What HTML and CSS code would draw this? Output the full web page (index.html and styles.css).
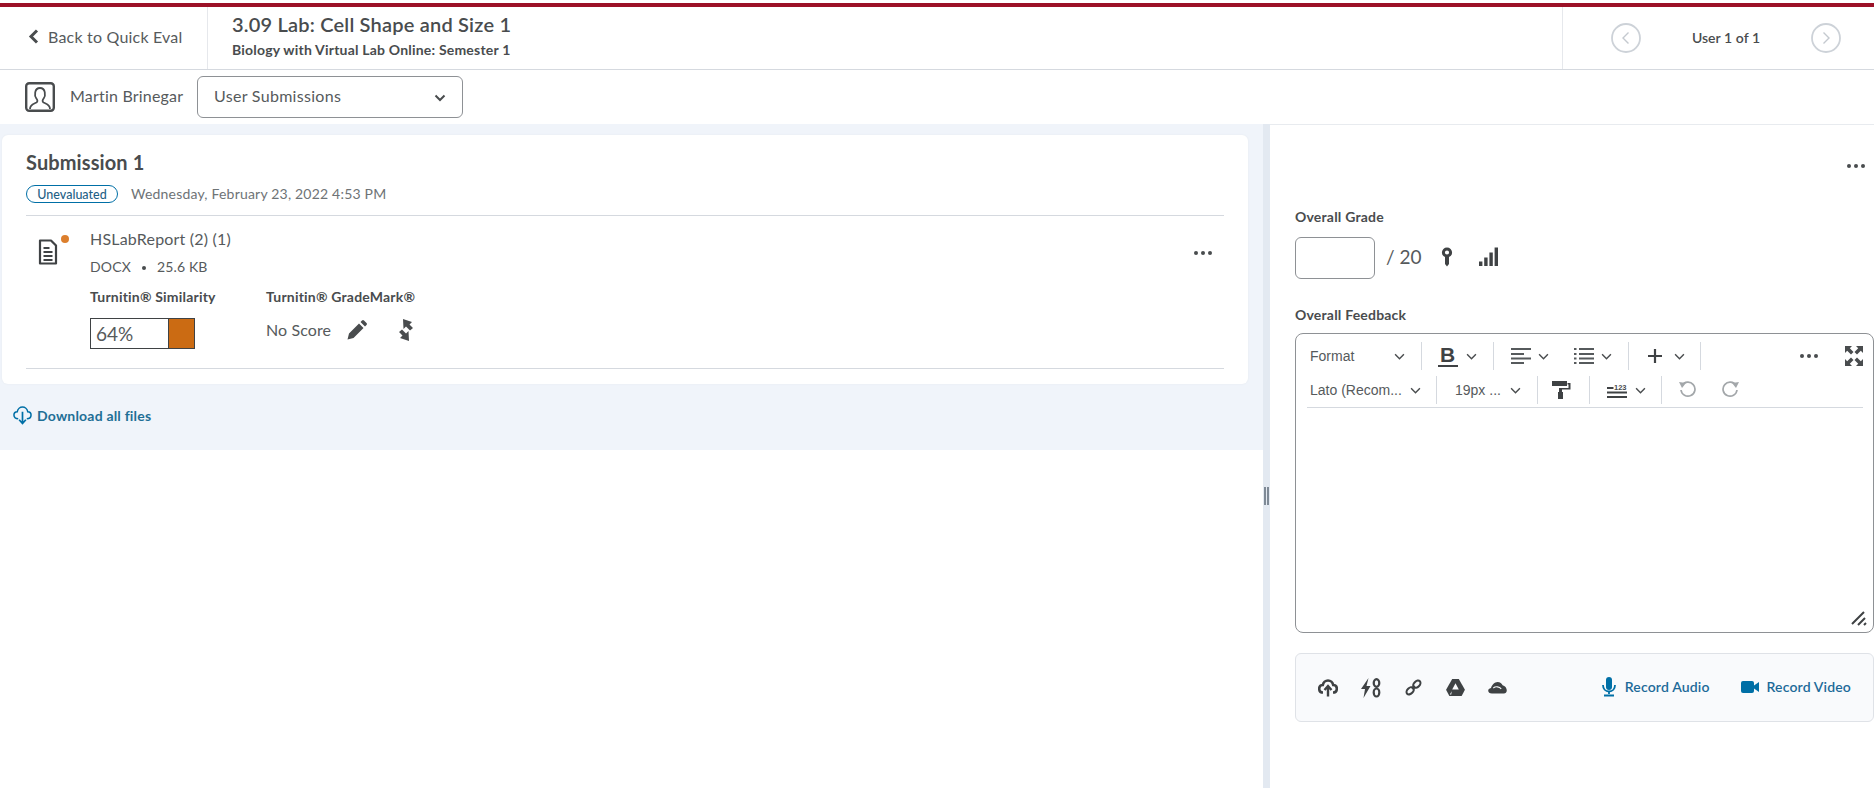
FILE: index.html
```html
<!DOCTYPE html>
<html lang="en">
<head>
<meta charset="utf-8">
<title>3.09 Lab: Cell Shape and Size 1</title>
<link rel="stylesheet" href="styles.css">
</head>
<body>
<div class="accent"></div>
<header class="header">
  <a class="back">
    <svg class="back-icon" viewBox="0 0 11 15" width="11" height="15"><path d="M9 1.500 3 7.500l6 6" fill="none" stroke="#494c4e" stroke-width="3"/></svg>
    <span>Back to Quick Eval</span>
  </a>
  <div class="titles">
    <h1 class="title">3.09 Lab: Cell Shape and Size 1</h1>
    <div class="subtitle">Biology with Virtual Lab Online: Semester 1</div>
  </div>
  <div class="pager">
    <span class="circle"><svg viewBox="0 0 30 30" width="30" height="30"><circle cx="15" cy="15" r="14" fill="none" stroke="#cdd2d8" stroke-width="1.800"/><path d="M17.500 9.500 12 15l5.500 5.500" fill="none" stroke="#c4c9cf" stroke-width="1.400"/></svg></span>
    <span class="pager-text">User 1 of 1</span>
    <span class="circle"><svg viewBox="0 0 30 30" width="30" height="30"><circle cx="15" cy="15" r="14" fill="none" stroke="#cdd2d8" stroke-width="1.800"/><path d="M12.500 9.500 18 15l-5.500 5.500" fill="none" stroke="#c4c9cf" stroke-width="1.400"/></svg></span>
  </div>
</header>
<div class="subbar">
  <svg class="avatar" viewBox="0 0 30 30" width="30" height="30"><rect x="1.200" y="1.200" width="27.600" height="27.600" rx="3" fill="none" stroke="#494c4e" stroke-width="2.400"/><path d="M5 27c0-4.500 3.500-5 6.500-6.500 1.500-1 1-2.500-.3-4.200C9.500 14 9 6 15 6s5.500 8 3.800 10.300c-1.300 1.700-1.800 3.200-.3 4.200 3 1.500 6.500 2 6.500 6.500" fill="none" stroke="#494c4e" stroke-width="1.800"/></svg>
  <span class="user-name">Martin Brinegar</span>
  <div class="select">
    <span class="select-text">User Submissions</span>
    <svg class="select-chev" viewBox="0 0 12 8" width="12" height="8"><path d="M1.500 1.500 6 6l4.500-4.500" fill="none" stroke="#494c4e" stroke-width="2"/></svg>
  </div>
</div>
<main class="main">
  <section class="left">
    <div class="left-top">
      <article class="card">
        <h2 class="card-title">Submission 1</h2>
        <div class="meta">
          <span class="pill">Unevaluated</span>
          <span class="date">Wednesday, February 23, 2022 4:53 PM</span>
        </div>
        <div class="file">
          <div class="file-icon">
            <svg viewBox="0 0 20 26" width="20" height="26"><path d="M2 1.500h11l5 5V24.500H2z" fill="none" stroke="#3f4244" stroke-width="2.200" stroke-linejoin="round"/><path d="M5.500 9h6M5.500 13h9M5.500 17h9M5.500 21h9" stroke="#3f4244" stroke-width="1.800"/></svg>
            <span class="dot"></span>
          </div>
          <div class="file-body">
            <div class="file-name">HSLabReport (2) (1)</div>
            <div class="file-meta"><span>DOCX</span><span class="bullet"></span><span>25.6 KB</span></div>
            <div class="turnitin">
              <div class="t-col t-sim">
                <div class="t-label">Turnitin® Similarity</div>
                <div class="score"><span class="score-num">64%</span><span class="score-color"></span></div>
              </div>
              <div class="t-col">
                <div class="t-label">Turnitin® GradeMark®</div>
                <div class="grademark">
                  <span>No Score</span>
                  <svg class="pencil" viewBox="0 0 20 20" width="20" height="20"><path d="M.500 19.500l1.500-6L12 3.500 16.500 8l-10 10zM13.500 2l1.500-1.500a1.500 1.500 0 0 1 2 0L19.500 3a1.500 1.500 0 0 1 0 2L18 6.500z" fill="#494c4e"/></svg>
                  <svg class="swap" viewBox="0 0 18 22" width="18" height="22"><path d="M6 0l9 3-2.500 2.500L16 9l-3 2.500-4-4L6.500 10zM12 22l-9-3 2.500-2.500L2 13l3-2.500 4 4L11.500 12z" fill="#494c4e"/></svg>
                </div>
              </div>
            </div>
          </div>
          <div class="dots file-dots"><i></i><i></i><i></i></div>
        </div>
      </article>
      <a class="download">
        <svg viewBox="0 0 20 20" width="19" height="19"><path d="M5.500 13.500C2.500 13.500 1 11.500 1 9.500s1.500-3.500 3.500-3.500C5 3 7.500 1 10 1s5 2 5.500 5c2 0 3.500 1.500 3.500 3.500s-1.500 4-4.500 4" fill="none" stroke="#006fa6" stroke-width="1.600"/><path d="M10 6v12M6.500 14.500 10 18.500l3.500-4" fill="none" stroke="#006fa6" stroke-width="1.800"/></svg>
        <span>Download all files</span>
      </a>
    </div>
  </section>
  <div class="splitter"><span class="grip"></span></div>
  <aside class="right">
    <div class="right-menu"><div class="dots"><i></i><i></i><i></i></div></div>
    <label class="field-label">Overall Grade</label>
    <div class="grade-row">
      <span class="grade-input"></span>
      <span class="grade-total">/ 20</span>
      <svg class="rubric" viewBox="0 0 12 20" width="12" height="20"><circle cx="6" cy="5.500" r="3.600" fill="none" stroke="#3f4244" stroke-width="3"/><path d="M4 9h4v8L6 19.500 4 17z" fill="#3f4244"/></svg>
      <svg class="bars" viewBox="0 0 20 20" width="20" height="20"><path d="M0 14.500h3.400V19H0zM5.200 10.500h3.400V19H5.200zM10.400 5.500h3.400V19h-3.400zM15.600 .500H19V19h-3.400z" fill="#3f4244"/></svg>
    </div>
    <label class="field-label feedback-label">Overall Feedback</label>
    <div class="editor">
      <div class="toolbar">
        <div class="tb-row">
          <span class="tb-text w-format">Format</span><svg class="chev" viewBox="0 0 10 6"><use href="#c"/></svg><span class="sep m16"></span>
          <span class="bold-b">B</span><svg class="chev m8" viewBox="0 0 10 6"><use href="#c"/></svg><span class="sep m16"></span>
          <svg class="tb-ic m17" viewBox="0 0 20 18" width="20" height="18"><path d="M0 2h20M0 7h13M0 11.500h20M0 16h13" stroke="#565a5c" stroke-width="2"/></svg><svg class="chev m7" viewBox="0 0 10 6"><use href="#c"/></svg>
          <svg class="tb-ic m25" viewBox="0 0 20 18" width="20" height="18"><path d="M5 2h15M5 7h15M5 11.500h15M5 16h15" stroke="#565a5c" stroke-width="2"/><path d="M0 2h2.500M0 7h2.500M0 11.500h2.500M0 16h2.500" stroke="#565a5c" stroke-width="2"/></svg><svg class="chev m7" viewBox="0 0 10 6"><use href="#c"/></svg><span class="sep m16"></span>
          <svg class="tb-ic m19" viewBox="0 0 14 14" width="14" height="14"><path d="M7 0v14M0 7h14" stroke="#3f4244" stroke-width="2.200"/></svg><svg class="chev m12" viewBox="0 0 10 6"><use href="#c"/></svg><span class="sep m15"></span>
          <div class="dots tb-dots"><i></i><i></i><i></i></div>
          <svg class="tb-ic full" viewBox="0 0 18 20" width="18" height="20"><path d="M0 0h7L4.800 2.200 8.500 6 6 8.500 2.200 4.800 0 7zM18 0v7l-2.200-2.200L12 8.500 9.500 6l3.700-3.800L11 0zM0 20v-7l2.200 2.200L6 11.500 8.500 14l-3.700 3.800L7 20zM18 20h-7l2.200-2.200L9.500 14l2.500-2.500 3.800 3.700L18 13z" fill="#494c4e"/></svg>
        </div>
        <div class="tb-row">
          <span class="tb-text w-font">Lato (Recom...</span><svg class="chev" viewBox="0 0 10 6"><use href="#c"/></svg><span class="sep m15"></span>
          <span class="tb-text w-size">19px ...</span><svg class="chev" viewBox="0 0 10 6"><use href="#c"/></svg><span class="sep m16"></span>
          <svg class="tb-ic m13" viewBox="0 0 20 18" width="20" height="18"><path d="M1 0h15v5H1z" fill="#3f4244"/><path d="M16.500 2H19.500V8.500H11V11h1v7H7v-7h1V7h9.500V3.500h-1z" fill="#3f4244"/></svg><span class="sep m18"></span>
          <svg class="tb-ic m17" viewBox="0 0 20 15" width="20" height="15"><path d="M0 5h6.500M0 9.500h20M0 14h20" stroke="#3f4244" stroke-width="2"/><text class="lh-num" x="7" y="6.500">123</text></svg><svg class="chev m8" viewBox="0 0 10 6"><use href="#c"/></svg><span class="sep m15"></span>
          <svg class="tb-ic m16" viewBox="0 0 18 18" width="18" height="18"><path d="M4 4.500A7 7 0 1 1 3 9" fill="none" stroke="#a3a7aa" stroke-width="1.700"/><path d="M1 1l7 1-4 5z" fill="#a3a7aa"/></svg>
          <svg class="tb-ic m26" viewBox="0 0 18 18" width="18" height="18"><path d="M14 4.500A7 7 0 1 0 15 9" fill="none" stroke="#a3a7aa" stroke-width="1.700"/><path d="M17 1l-7 1 4 5z" fill="#a3a7aa"/></svg>
        </div>
      </div>
      <svg class="resize" viewBox="0 0 16 16" width="16" height="16"><path d="M1 14 13 2M7 15l7-7M13 15l2-2" stroke="#3f4244" stroke-width="2" fill="none"/></svg>
    </div>
    <div class="attach">
      <div class="attach-icons">
        <svg viewBox="0 0 20 18" width="20" height="18"><path d="M5 13.500C2.500 13.500 1.200 12 1.200 9.500S3 6 4.800 6C5.300 3.500 7.500 1.500 10 1.500s4.700 2 5.200 4.500C17 6 18.800 7 18.800 9.500S17.500 13.500 15 13.500" fill="none" stroke="#3f4244" stroke-width="2.600"/><path d="M10 17.500V8M6.500 11 10 7l3.500 4" fill="none" stroke="#3f4244" stroke-width="2.400"/></svg>
        <svg viewBox="0 0 20 20" width="20" height="20"><path d="M7.500 0 0 11h4l-1.500 9L9.500 8h-4z" fill="#3f4244"/><ellipse cx="15.500" cy="5" rx="2.800" ry="3.800" fill="none" stroke="#3f4244" stroke-width="2.200"/><ellipse cx="15.500" cy="14.500" rx="2.800" ry="4" fill="none" stroke="#3f4244" stroke-width="2.200"/></svg>
        <svg viewBox="0 0 20 20" width="19" height="19"><ellipse cx="13.500" cy="6.500" rx="4.500" ry="3" transform="rotate(-45 13.500 6.500)" fill="none" stroke="#3f4244" stroke-width="2.200"/><ellipse cx="6.500" cy="13.500" rx="4.500" ry="3" transform="rotate(-45 6.500 13.500)" fill="none" stroke="#3f4244" stroke-width="2.200"/><path d="M8.500 11.500l3-3" stroke="#3f4244" stroke-width="2.200"/></svg>
        <svg viewBox="0 0 20 18" width="19" height="17"><path d="M6.500 0h7L20 11.500 16.500 18h-13L0 11.500z" fill="#3f4244"/><path d="M10 4.500 6.500 11h7zM6 13l-2 3.500h1.500z" fill="#f9fafb"/></svg>
        <svg viewBox="0 0 20 14" width="19" height="13"><path d="M4 13.500C1.500 13.500 0 12 0 10.500S1 8 3 7.500C4 4 7 1 10 1s4.500 1.500 5.500 3.500C18 5 20 7.500 20 10s-1.500 3.500-3 3.500z" fill="#3f4244"/><path d="M5.500 7.500C8 5.500 12 6 14 8.500" fill="none" stroke="#f9fafb" stroke-width="1.200"/></svg>
      </div>
      <div class="records">
        <a class="record">
          <svg viewBox="0 0 16 20" width="16" height="20"><rect x="5" y="0" width="6" height="13" rx="3" fill="#006fa6"/><path d="M2 8c0 4 2.500 6.500 6 6.500s6-2.500 6-6.500" fill="none" stroke="#006fa6" stroke-width="1.800"/><path d="M8 14v3M3 18.500h10" stroke="#006fa6" stroke-width="1.800"/></svg>
          <span>Record Audio</span>
        </a>
        <a class="record">
          <svg viewBox="0 0 18 12" width="18" height="12"><rect x="0" y="0" width="13" height="12" rx="2" fill="#006fa6"/><path d="M13 4.500 18 1v10l-5-3.500z" fill="#006fa6"/></svg>
          <span>Record Video</span>
        </a>
      </div>
    </div>
  </aside>
</main>
<svg class="defs" width="0" height="0"><defs><path id="c" d="M1 1l4 4 4-4" fill="none" stroke="#494c4e" stroke-width="1.300"/></defs></svg>
</body>
</html>
```

FILE: styles.css
```css
* { box-sizing: border-box; }
html, body { margin: 0; height: 100%; }
body {
  width: 1874px;
  height: 788px;
  overflow: hidden;
  background: #fff;
  color: #494c4e;
  font-family: Lato, "Noto Sans", sans-serif;
  font-size: 16px;
}
.accent { height: 4px; margin-top: 3px; background: #9c1127; }
.header {
  display: flex;
  height: 63px;
  border-bottom: 1px solid #d5d9df;
}
.back {
  display: flex;
  align-items: center;
  gap: 9px;
  width: 208px;
  padding: 0 0 3px 28px;
  border-right: 1px solid #e6e8ec;
  font-size: 16px;
  letter-spacing: 0.2px;
  color: #565a5c;
}
.titles { flex: 1; padding: 5px 0 0 24px; }
.title {
  margin: 0;
  font-size: 20px;
  line-height: 24px;
  font-weight: 600;
  letter-spacing: 0.2px;
  color: #494c4e;
}
.subtitle {
  margin-top: 6px;
  font-size: 14px;
  line-height: 16px;
  font-weight: 700;
  letter-spacing: 0.2px;
  color: #494c4e;
}
.pager {
  display: flex;
  align-items: center;
  width: 312px;
  padding-left: 48px;
  border-left: 1px solid #e6e8ec;
}
.circle { display: flex; width: 30px; height: 30px; }
.pager-text {
  width: 170px;
  padding-bottom: 2px;
  text-align: center;
  font-size: 14px;
  font-weight: 600;
  letter-spacing: 0.05px;
}
.subbar {
  display: flex;
  align-items: center;
  height: 54px;
  padding-left: 25px;
}
.avatar { flex: none; }
.user-name { margin: 0 0 4px 15px; width: 127px; color: #565a5c; letter-spacing: 0.2px; }
.select {
  display: flex;
  align-items: center;
  justify-content: space-between;
  width: 266px;
  height: 42px;
  padding: 0 16px;
  border: 1px solid #8e9195;
  border-radius: 6px;
  color: #565a5c;
  letter-spacing: 0.3px;
}
.select-text { margin-bottom: 4px; }
.select-chev { margin-top: 2px; }
.main { display: flex; height: 664px; }
.left { width: 1263px; }
.left-top { height: 326px; background: #f0f4fa; padding: 11px 15px 0 2px; }
.card {
  height: 249px;
  padding: 14px 24px 0;
  background: #fff;
  border-radius: 6px;
  box-shadow: 0 0 2px #e4e8ee;
}
.card-title {
  margin: 0;
  font-size: 20px;
  line-height: 26px;
  font-weight: 700;
  letter-spacing: 0.1px;
  color: #494c4e;
}
.meta { display: flex; align-items: center; gap: 13px; height: 22px; margin-top: 7px; }
.pill {
  display: flex;
  align-items: center;
  justify-content: center;
  width: 92px;
  height: 18px;
  margin-top: 2px;
  border: 1px solid #006fa6;
  border-radius: 9px;
  font-size: 12.500px;
  font-weight: 500;
  color: #1f5f86;
}
.date { font-size: 14px; letter-spacing: 0.2px; color: #6e7376; }
.file {
  display: flex;
  height: 154px;
  margin-top: 11px;
  border-top: 1px solid #d5d9df;
  border-bottom: 1px solid #d5d9df;
}
.file-icon { position: relative; width: 64px; padding: 23px 0 0 12px; }
.dot {
  position: absolute;
  left: 35px;
  top: 19px;
  width: 8px;
  height: 8px;
  border-radius: 50%;
  background: #dc7f2d;
}
.file-body { flex: 1; padding-top: 13px; }
.file-name { font-size: 16px; line-height: 20px; letter-spacing: 0.2px; color: #565a5c; }
.file-meta {
  display: flex;
  align-items: center;
  margin-top: 8px;
  font-size: 14px;
  line-height: 20px;
  letter-spacing: 0.15px;
  color: #565a5c;
}
.bullet {
  width: 4px;
  height: 4px;
  margin: 2px 11px 0;
  border-radius: 50%;
  background: #494c4e;
}
.turnitin { display: flex; margin-top: 10px; }
.t-col { display: flex; flex-direction: column; }
.t-sim { width: 176px; }
.t-label { font-size: 14px; line-height: 20px; font-weight: 700; letter-spacing: 0.2px; color: #494c4e; }
.score {
  display: flex;
  width: 105px;
  height: 31px;
  margin-top: 11px;
  border: 1px solid #3f4244;
}
.score-num { flex: 1; padding-left: 5px; font-size: 19px; line-height: 29px; color: #565a5c; }
.score-color { width: 26px; background: #cb6b13; border-left: 1px solid #3f4244; }
.grademark { display: flex; align-items: center; height: 31px; margin-top: 7px; font-size: 16px; letter-spacing: 0.1px; color: #565a5c; }
.pencil { margin-left: 16px; }
.swap { margin-left: 30px; }
.dots { display: flex; gap: 3px; align-items: center; }
.dots i { width: 4px; height: 4px; border-radius: 50%; background: #494c4e; }
.file-dots { align-self: flex-start; margin: 35px 12px 0 0; }
.download {
  display: flex;
  align-items: center;
  gap: 5px;
  height: 20px;
  margin: 21px 0 0 11px;
  font-size: 14px;
  font-weight: 700;
  letter-spacing: 0.2px;
  color: #1f6f96;
}
.splitter { position: relative; width: 7px; background: #e3e9f1; }
.grip {
  position: absolute;
  left: 1px;
  top: 363px;
  width: 5px;
  height: 18px;
  border-left: 2px solid #7f8a96;
  border-right: 2px solid #7f8a96;
}
.right {
  flex: 1;
  min-width: 0;
  padding-left: 25px;
  border-top: 1px solid #e8ebef;
  overflow: hidden;
}
.right-menu { display: flex; justify-content: flex-end; padding: 39px 9px 0 0; height: 82px; }
.right-menu .dots { height: 4px; }
.field-label {
  display: block;
  font-size: 14px;
  line-height: 20px;
  font-weight: 700;
  letter-spacing: 0.2px;
  color: #494c4e;
}
.grade-row { display: flex; align-items: center; height: 42px; margin-top: 10px; }
.grade-input {
  width: 80px;
  height: 42px;
  border: 1px solid #8e9195;
  border-radius: 6px;
}
.grade-total { margin: 0 0 4px 11px; font-size: 19px; color: #565a5c; }
.rubric { margin: 0 0 2px 19px; }
.bars { margin: 0 0 2px 26px; }
.feedback-label { margin-top: 26px; }
.editor {
  position: relative;
  width: 579px;
  height: 300px;
  margin-top: 8px;
  border: 1px solid #8e9195;
  border-radius: 8px;
}
.toolbar { margin: 0 10px 0 11px; padding-top: 5px; border-bottom: 1px solid #d5d9df; height: 74px; }
.tb-row { display: flex; align-items: center; height: 34px; }
.tb-ic { flex: none; }
.tb-text {
  font-family: "Liberation Sans", Arial, sans-serif;
  font-size: 14px;
  color: #565a5c;
  white-space: nowrap;
}
.w-format { width: 84px; margin-left: 3px; }
.w-font { width: 100px; margin-left: 3px; }
.w-size { width: 55px; margin-left: 18px; }
.chev { flex: none; width: 11px; height: 7px; }
.sep { flex: none; width: 1px; height: 28px; background: #d5d9df; }
.m7 { margin-left: 7px; }
.m8 { margin-left: 8px; }
.m12 { margin-left: 12px; }
.m13 { margin-left: 13px; }
.m15 { margin-left: 15px; }
.m16 { margin-left: 16px; }
.m17 { margin-left: 17px; }
.m18 { margin-left: 18px; }
.m19 { margin-left: 19px; }
.m25 { margin-left: 25px; }
.m26 { margin-left: 26px; }
.bold-b {
  flex: none;
  width: 20px;
  height: 22px;
  margin-left: 16px;
  padding-left: 2px;
  font-family: "Liberation Sans", Arial, sans-serif;
  font-size: 21px;
  line-height: 20px;
  font-weight: 700;
  border-bottom: 2px solid #3f4244;
  color: #3f4244;
}
.lh-num { font-family: "Liberation Sans", Arial, sans-serif; font-size: 7.500px; font-weight: 700; fill: #494c4e; }
.tb-dots { margin-left: 99px; }
.full { margin-left: 27px; }
.resize { position: absolute; right: 6px; bottom: 6px; }
.attach {
  display: flex;
  align-items: center;
  justify-content: space-between;
  width: 579px;
  height: 69px;
  margin-top: 20px;
  padding: 0 22px 0 22px;
  background: #f9fafc;
  border: 1px solid #dfe2e7;
  border-radius: 6px;
}
.attach-icons { display: flex; align-items: center; gap: 23px; }
.records { display: flex; align-items: center; gap: 31px; padding-bottom: 2px; }
.record {
  display: flex;
  align-items: center;
  gap: 8px;
  font-size: 14px;
  font-weight: 600;
  letter-spacing: 0.15px;
  color: #1d6a99;
}
.defs { position: absolute; }
```
